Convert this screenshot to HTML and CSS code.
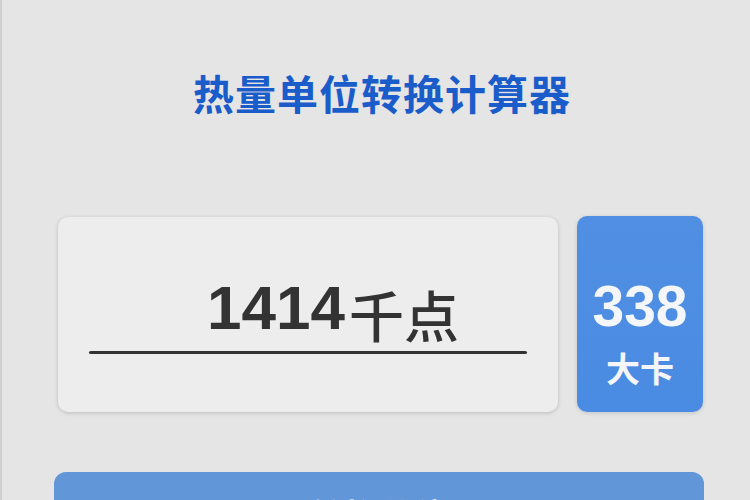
FILE: index.html
```html
<!DOCTYPE html>
<html lang="zh">
<head>
<meta charset="utf-8">
<link rel="stylesheet" href="styles.css">
</head>
<body>
<div class="page">
  <h1 class="title">热量单位转换计算器</h1>
  <div class="row">
    <div class="input-card">
      <div class="value"><span class="num">1414</span><span class="unit">千点</span></div>
      <div class="line"></div>
    </div>
    <div class="result-card">
      <div class="res-num">338</div>
      <div class="res-unit">大卡</div>
    </div>
  </div>
  <div class="button"><span class="btn-text">转换单位</span></div>
</div>
</body>
</html>
```
FILE: styles.css
```css
html, body {
  margin: 0;
  padding: 0;
  height: 100%;
  overflow: hidden;
  background: #e5e5e5;
}
.page {
  height: 500px;
  box-sizing: border-box;
  border-left: 2px solid #cfcfcf;
  padding-top: 69px;
  font-family: "Noto Sans CJK SC", "Liberation Sans", sans-serif;
}
.title {
  margin: 0;
  padding-left: 12px;
  text-align: center;
  font-size: 41px;
  line-height: 46px;
  font-weight: 700;
  color: #1a5cc9;
  letter-spacing: 1px;
}
.row {
  display: flex;
  margin-top: 102px;
  margin-left: 56px;
  gap: 19px;
}
.input-card {
  width: 500px;
  height: 195px;
  box-sizing: border-box;
  background: #ededed;
  border-radius: 10px;
  box-shadow: 0 1px 4px rgba(0,0,0,0.18);
  padding: 52px 31px 0 31px;
}
.value {
  display: flex;
  align-items: baseline;
  padding-left: 118px;
  height: 72px;
  color: #333333;
}
.num {
  font-family: "Liberation Sans", Arial, sans-serif;
  font-weight: 700;
  font-size: 62px;
  line-height: 72px;
}
.unit {
  font-family: "Noto Sans CJK SC", sans-serif;
  font-weight: 500;
  font-size: 55px;
  line-height: 72px;
  margin-left: 4px;
  position: relative;
  top: 8px;
}
.line {
  margin-top: 10px;
  height: 3px;
  border-radius: 2px;
  background: #333333;
}
.result-card {
  width: 126px;
  height: 196px;
  margin-top: -1px;
  box-sizing: border-box;
  background: linear-gradient(#508fe2, #4a8be3);
  border-radius: 10px;
  box-shadow: 0 1px 4px rgba(0,0,0,0.15);
  color: #f4f6fa;
  display: flex;
  flex-direction: column;
  align-items: center;
  padding-top: 60px;
}
.res-num {
  font-family: "Liberation Sans", Arial, sans-serif;
  font-weight: 700;
  font-size: 57px;
  line-height: 60px;
}
.res-unit {
  font-family: "Noto Sans CJK SC", sans-serif;
  font-weight: 700;
  font-size: 34px;
  line-height: 40px;
  margin-top: 12px;
}
.button {
  margin: 60px 0 0 52px;
  width: 650px;
  height: 90px;
  border-radius: 12px;
  background: #6196d9;
  text-align: center;
  padding-top: 23px;
  box-sizing: border-box;
}
.btn-text {
  color: #ffffff;
  font-size: 34px;
  font-weight: 700;
  line-height: 40px;
}
```
